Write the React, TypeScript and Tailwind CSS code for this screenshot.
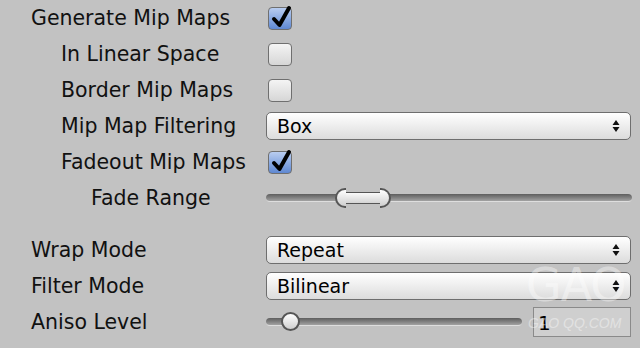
import React from 'react'

const font = { fontFamily: '"DejaVu Sans", "Liberation Sans", sans-serif' }

const Check = ({ checked }: { checked: boolean }) => (
  <span
    className={
      'relative block w-[24px] h-[23px] rounded-[4px] border border-[#6f6f6f] ' +
      (checked
        ? 'bg-gradient-to-b from-[#b9cdf0] to-[#5f88d2]'
        : 'bg-gradient-to-b from-[#f4f4f4] to-[#d6d6d6]')
    }
  >
    {checked && (
      <svg className="absolute left-[2px] top-[-3px]" width="22" height="24" viewBox="0 0 22 24">
        <path d="M3 14 L8.5 20 L18 3" fill="none" stroke="#000" strokeWidth="4" strokeLinecap="round" strokeLinejoin="round" />
      </svg>
    )}
  </span>
)

const Popup = ({ value }: { value: string }) => (
  <div className="flex items-center h-[28px] w-[365px] rounded-[5px] border border-[#6e6e6e] bg-gradient-to-b from-[#ffffff] to-[#dcdcdc] pl-[10px] pr-[10px]">
    <span className="flex-1 text-[19px] text-black">{value}</span>
    <svg width="8" height="14" viewBox="0 0 8 14">
      <path d="M4 1 L7.5 6 L0.5 6 Z M4 13 L7.5 8 L0.5 8 Z" fill="#111" />
    </svg>
  </div>
)

const Track = ({ className }: { className: string }) => (
  <div className={'h-[8px] rounded-full bg-gradient-to-b from-[#5e5e5e] to-[#a2a2a2] border-b border-[#dedede] ' + className} />
)

const Row = ({ label, indent, children }: { label: string; indent: number; children: React.ReactNode }) => (
  <div className="flex items-center h-[36px]">
    <div
      className={
        'w-[266px] text-[20.5px] text-[#111] ' +
        (indent === 0 ? 'pl-[31px]' : indent === 1 ? 'pl-[61px]' : 'pl-[91px]')
      }
    >
      {label}
    </div>
    {children}
  </div>
)

export default function App() {
  return (
    <div className="relative w-[640px] h-[348px] bg-[#c2c2c2] overflow-hidden" style={font}>
      <div className="flex flex-col">
        <Row label="Generate Mip Maps" indent={0}>
          <span className="ml-[2px]"><Check checked /></span>
        </Row>
        <Row label="In Linear Space" indent={1}>
          <span className="ml-[2px]"><Check checked={false} /></span>
        </Row>
        <Row label="Border Mip Maps" indent={1}>
          <span className="ml-[2px]"><Check checked={false} /></span>
        </Row>
        <Row label="Mip Map Filtering" indent={1}>
          <Popup value="Box" />
        </Row>
        <Row label="Fadeout Mip Maps" indent={1}>
          <span className="ml-[2px]"><Check checked /></span>
        </Row>
        <Row label="Fade Range" indent={2}>
          <div className="relative w-[366px] flex items-center h-[24px]">
            <Track className="w-full" />
            <div className="absolute left-[69px] top-[2px] flex items-center">
              <span className="w-[11px] h-[20px] rounded-l-full border-2 border-r-0 border-[#555] bg-gradient-to-b from-[#ffffff] to-[#cfcfcf]" />
              <span className="w-[34px] h-[12px] border-y border-[#555] bg-gradient-to-b from-[#fafafa] to-[#d4d4d4]" />
              <span className="w-[11px] h-[20px] rounded-r-full border-2 border-l-0 border-[#555] bg-gradient-to-b from-[#ffffff] to-[#cfcfcf]" />
            </div>
          </div>
        </Row>
        <div className="h-[16px]" />
        <Row label="Wrap Mode" indent={0}>
          <Popup value="Repeat" />
        </Row>
        <Row label="Filter Mode" indent={0}>
          <Popup value="Bilinear" />
        </Row>
        <Row label="Aniso Level" indent={0}>
          <div className="relative w-[256px] flex items-center h-[24px]">
            <Track className="w-full" />
            <span className="absolute left-[15px] top-[2px] w-[19px] h-[19px] rounded-full border-2 border-[#555] bg-gradient-to-b from-[#ffffff] to-[#cfcfcf]" />
          </div>
          <div className="ml-[11px] w-[98px] h-[30px] border border-[#8a8a8a] bg-[#cfcfcf] pl-[4px] text-[20px] leading-[30px] text-black">
            1
          </div>
        </Row>
      </div>
      <div className="absolute left-[526px] top-[262px] text-[46px] leading-none text-white/40 tracking-[-1px] pointer-events-none" style={{ fontFamily: '"DejaVu Sans", sans-serif' }}>
        GAO
      </div>
      <div className="absolute left-[528px] top-[313px] text-[14px] italic text-white/40 pointer-events-none" style={{ fontFamily: '"Liberation Sans", sans-serif' }}>
        GAO QQ.COM
      </div>
    </div>
  )
}
